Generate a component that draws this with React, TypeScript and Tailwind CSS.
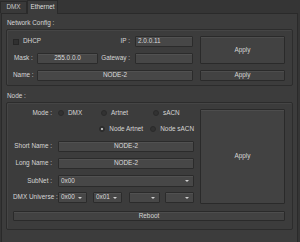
import React from 'react';

const field =
  'h-[11px] rounded-[1px] border border-[#2b2b2b] bg-[#474747] shadow-[inset_0_1px_0_#515151] flex items-center text-[#dcdcdc]';
const button =
  'rounded-[1px] border border-[#2a2a2a] bg-[#424242] shadow-[inset_0_1px_0_#4d4d4d] flex items-center justify-center text-[#d6d6d6]';
const groupBox = 'rounded-[2px] border border-[#2c2c2c] shadow-[inset_1px_1px_0_#454545]';

function Arrow() {
  return (
    <span className="ml-auto mr-[4px] h-0 w-0 border-x-[2px] border-t-[2px] border-x-transparent border-t-[#d0d0d0]" />
  );
}

function Radio({ label, checked = false }: { label: string; checked?: boolean }) {
  return (
    <div className="flex items-center gap-[4px] whitespace-nowrap">
      <span className="flex h-[6px] w-[6px] shrink-0 items-center justify-center rounded-full border border-[#2a2a2a] bg-[#323232]">
        {checked && <span className="h-[2px] w-[2px] rounded-full bg-[#e0e0e0]" />}
      </span>
      <span>{label}</span>
    </div>
  );
}

function Select({ value, className }: { value?: string; className: string }) {
  return (
    <div className={`${field} ${className}`}>
      <span className="pl-[2px]">{value}</span>
      <Arrow />
    </div>
  );
}

export default function App() {
  return (
    <div
      className="h-[242px] w-[300px] overflow-hidden whitespace-nowrap bg-[#353535] text-[6.4px] leading-none text-[#d6d6d6]"
      style={{ fontFamily: '"Liberation Sans", Arial, sans-serif' }}
    >
      {/* tabs */}
      <div className="flex h-[13px] items-end">
        <div className="flex h-[12px] w-[27px] items-center justify-center border border-b-0 border-[#2a2a2a] bg-[#393939] text-[#c8c8c8]">
          DMX
        </div>
        <div className="relative z-10 -mb-px flex h-[14px] w-[31px] items-center justify-center border border-b-0 border-[#2a2a2a] bg-[#3c3c3c] text-[#dedede]">
          Ethernet
        </div>
      </div>

      {/* panel */}
      <div className="ml-px h-[232px] w-[297px] border border-[#2a2a2a] bg-[#3c3c3c] px-[4px]">
        <div className="flex h-[15px] items-center pl-px pt-[3px]">Network Config :</div>

        <div className={`${groupBox} flex gap-[7px] pb-[4px] pl-[6px] pr-[5px] pt-[6px]`}>
          <div className="flex w-[180px] flex-col gap-[6px]">
            <div className="flex h-[11px] items-center">
              <span className="mr-[4px] h-[6px] w-[6px] border border-[#262626] bg-[#303030]" />
              <span>DHCP</span>
              <span className="flex-1 pr-[5px] text-right">IP :</span>
              <div className={`${field} w-[58px] pl-[2px]`}>2.0.0.11</div>
            </div>
            <div className="flex h-[11px] items-center">
              <span className="w-[24px] pl-px">Mask :</span>
              <div className={`${field} w-[61px] justify-center`}>255.0.0.0</div>
              <span className="w-[37px] pr-[5px] text-right">Gateway :</span>
              <div className={`${field} w-[58px]`} />
            </div>
            <div className="flex h-[11px] items-center">
              <span className="w-[24px]">Name :</span>
              <div className={`${field} w-[156px] justify-center`}>NODE-2</div>
            </div>
          </div>
          <div className="flex w-[85px] flex-col gap-[6px]">
            <div className={`${button} h-[28px]`}>Apply</div>
            <div className={`${button} h-[11px]`}>Apply</div>
          </div>
        </div>

        <div className="flex h-[16px] items-center pl-px pt-[4px]">Node :</div>

        <div className={`${groupBox} pb-[8px] pl-[6px] pr-[5px] pt-[5px]`}>
          <div className="flex gap-[6px]">
            <div className="flex w-[181px] flex-col">
              <div className="flex h-[10px] items-center">
                <span className="w-[45px] pr-[6px] text-right">Mode :</span>
                <div className="w-[43px]">
                  <Radio label="DMX" />
                </div>
                <div className="w-[52px]">
                  <Radio label="Artnet" />
                </div>
                <Radio label="sACN" />
              </div>
              <div className="mt-[6px] flex h-[10px] items-center">
                <span className="w-[88px]" />
                <div className="w-[52px]">
                  <Radio label="Node Artnet" checked />
                </div>
                <Radio label="Node sACN" />
              </div>
              <div className="mt-[7px] flex h-[11px] items-center">
                <span className="w-[45px] pr-[6px] text-right">Short Name :</span>
                <div className={`${field} w-[136px] justify-center`}>NODE-2</div>
              </div>
              <div className="mt-[6px] flex h-[11px] items-center">
                <span className="w-[45px] pr-[6px] text-right">Long Name :</span>
                <div className={`${field} w-[136px] justify-center`}>NODE-2</div>
              </div>
              <div className="mt-[6px] flex h-[12px] items-center">
                <span className="w-[45px] pr-[6px] text-right">SubNet :</span>
                <Select value="0x00" className="h-[12px] w-[136px]" />
              </div>
              <div className="mt-[5px] flex h-[11px] items-center">
                <span className="w-[45px] pr-[6px] text-right">DMX Universe :</span>
                <Select value="0x00" className="w-[29px]" />
                <Select value="0x01" className="ml-[6px] w-[29px]" />
                <Select className="ml-[7px] w-[31px]" />
                <Select className="ml-[5px] w-[29px]" />
              </div>
            </div>
            <div className={`${button} mt-[1px] h-[95px] w-[85px]`}>Apply</div>
          </div>
          <div className={`${button} mt-[7px] h-[10px] w-[272px]`}>Reboot</div>
        </div>
      </div>
    </div>
  );
}
